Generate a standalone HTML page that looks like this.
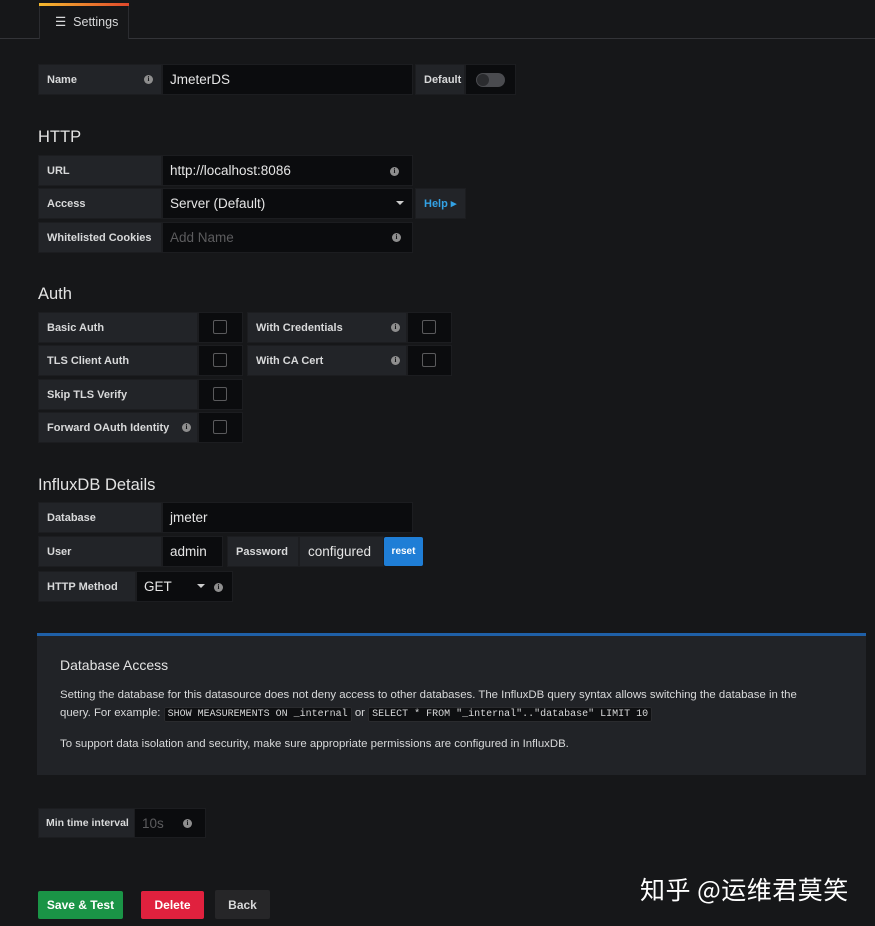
<!DOCTYPE html>
<html><head><meta charset="utf-8"><style>
*{box-sizing:border-box;margin:0;padding:0}
body{width:875px;height:926px;background:#161719;font-family:"Liberation Sans","Noto Sans CJK SC",sans-serif;color:#d8d9da;position:relative;overflow:hidden}
.a{position:absolute}
.lb{position:absolute;background:#222428;color:#d8d9da;font-size:11px;font-weight:bold;padding-left:8px;display:flex;align-items:center;border:1px solid #1c1d20;white-space:nowrap}
.in{position:absolute;background:#0b0c0e;color:#e6e6e6;font-size:13.5px;padding-left:7px;display:flex;align-items:center;border:1px solid #1c1d20}
.ic{position:absolute;width:9px;height:9px;border-radius:50%;background:#8e8e8e;color:#161719;font-size:7px;font-weight:bold;text-align:center;line-height:9px;font-family:"Liberation Serif",serif}
.cb{position:absolute;width:14px;height:14px;border:1px solid #5a5a5c;border-radius:2px}
.box{position:absolute;background:#0b0c0e;border:1px solid #1c1d20}
h3{position:absolute;font-size:16.5px;font-weight:normal;color:#e3e3e3}
code{font-family:"Liberation Mono",monospace;font-size:10px;background:#0e0f11;border:1px solid #2a2b2e;padding:1px 3px;border-radius:2px}
.btn{position:absolute;font-size:12px;font-weight:bold;color:#fff;display:flex;align-items:center;justify-content:center;border-radius:2px}
</style></head><body>
<div class="a" style="left:0;top:38px;width:875px;height:1px;background:#333438"></div>
<div class="a" style="left:39px;top:4px;width:90px;height:35px;background:#161719;border:1px solid #2b2c30;border-bottom:none"></div>
<div class="a" style="left:39px;top:3px;width:90px;height:3px;background:linear-gradient(90deg,#f5b92e,#e0482c)"></div>
<div class="a" style="left:55px;top:14px;font-size:12.5px;color:#d8d9da">☰&nbsp; Settings</div>

<div class="lb" style="left:38px;top:64px;width:124px;height:31px">Name</div><div class="ic" style="left:144px;top:75px">i</div>
<div class="in" style="left:162px;top:64px;width:251px;height:31px">JmeterDS</div>
<div class="lb" style="left:415px;top:64px;width:50px;height:31px">Default</div>
<div class="box" style="left:465px;top:64px;width:51px;height:31px"></div>
<div class="a" style="left:476px;top:73px;width:29px;height:14px;border-radius:7px;background:#4a4b4f"></div>
<div class="a" style="left:477px;top:74px;width:12px;height:12px;border-radius:50%;background:#2a2b2e"></div>

<h3 style="left:38px;top:128px">HTTP</h3>
<div class="lb" style="left:38px;top:155px;width:124px;height:31px">URL</div>
<div class="in" style="left:162px;top:155px;width:251px;height:31px">http://localhost:8086</div><div class="ic" style="left:390px;top:167px">i</div>
<div class="lb" style="left:38px;top:188px;width:124px;height:31px">Access</div>
<div class="in" style="left:162px;top:188px;width:251px;height:31px">Server (Default)</div>
<div class="a" style="left:396px;top:201px;border:4px solid transparent;border-top:4px solid #ccc"></div>
<div class="lb" style="left:415px;top:188px;width:51px;height:31px;color:#33a2e5">Help ▸</div>
<div class="lb" style="left:38px;top:222px;width:124px;height:31px">Whitelisted Cookies</div>
<div class="in" style="left:162px;top:222px;width:251px;height:31px;color:#5c5c5e">Add Name</div><div class="ic" style="left:392px;top:233px">i</div>

<h3 style="left:38px;top:285px">Auth</h3>
<div class="lb" style="left:38px;top:312px;width:160px;height:31px">Basic Auth</div><div class="box" style="left:198px;top:312px;width:45px;height:31px"></div><div class="cb" style="left:213px;top:320px"></div>
<div class="lb" style="left:247px;top:312px;width:160px;height:31px">With Credentials</div><div class="ic" style="left:391px;top:323px">i</div><div class="box" style="left:407px;top:312px;width:45px;height:31px"></div><div class="cb" style="left:422px;top:320px"></div>
<div class="lb" style="left:38px;top:345px;width:160px;height:31px">TLS Client Auth</div><div class="box" style="left:198px;top:345px;width:45px;height:31px"></div><div class="cb" style="left:213px;top:353px"></div>
<div class="lb" style="left:247px;top:345px;width:160px;height:31px">With CA Cert</div><div class="ic" style="left:391px;top:356px">i</div><div class="box" style="left:407px;top:345px;width:45px;height:31px"></div><div class="cb" style="left:422px;top:353px"></div>
<div class="lb" style="left:38px;top:379px;width:160px;height:31px">Skip TLS Verify</div><div class="box" style="left:198px;top:379px;width:45px;height:31px"></div><div class="cb" style="left:213px;top:387px"></div>
<div class="lb" style="left:38px;top:412px;width:160px;height:31px">Forward OAuth Identity</div><div class="ic" style="left:182px;top:423px">i</div><div class="box" style="left:198px;top:412px;width:45px;height:31px"></div><div class="cb" style="left:213px;top:420px"></div>

<h3 style="left:38px;top:476px">InfluxDB Details</h3>
<div class="lb" style="left:38px;top:502px;width:124px;height:31px">Database</div>
<div class="in" style="left:162px;top:502px;width:251px;height:31px">jmeter</div>
<div class="lb" style="left:38px;top:536px;width:124px;height:31px">User</div>
<div class="in" style="left:162px;top:536px;width:61px;height:31px">admin</div>
<div class="lb" style="left:227px;top:536px;width:72px;height:31px">Password</div>
<div class="lb" style="left:299px;top:536px;width:85px;height:31px;font-weight:normal;font-size:13.5px;color:#e6e6e6">configured</div>
<div class="btn" style="left:384px;top:537px;width:39px;height:29px;background:#1f7ed6;font-size:10px">reset</div>
<div class="lb" style="left:38px;top:571px;width:98px;height:31px">HTTP Method</div>
<div class="in" style="left:136px;top:571px;width:97px;height:31px">GET</div>
<div class="a" style="left:197px;top:584px;border:4px solid transparent;border-top:4px solid #ccc"></div>
<div class="ic" style="left:214px;top:583px">i</div>

<div class="a" style="left:37px;top:633px;width:829px;height:142px;background:#212327;border-top:3px solid #1f60a8"></div>
<div class="a" style="left:60px;top:657px;font-size:14px;color:#e3e3e3">Database Access</div>
<div class="a" style="left:60px;top:686px;width:790px;font-size:11.4px;line-height:18px;color:#d8d9da;white-space:nowrap">Setting the database for this datasource does not deny access to other databases. The InfluxDB query syntax allows switching the database in the<br>query. For example: <code>SHOW MEASUREMENTS ON _internal</code> or <code>SELECT * FROM "_internal".."database" LIMIT 10</code></div>
<div class="a" style="left:60px;top:738px;font-size:11.4px;color:#d8d9da">To support data isolation and security, make sure appropriate permissions are configured in InfluxDB.</div>

<div class="lb" style="left:38px;top:808px;width:97px;height:30px;font-size:10.5px;padding-left:7px">Min time interval</div>
<div class="in" style="left:134px;top:808px;width:72px;height:30px;color:#5c5c5e">10s</div><div class="ic" style="left:183px;top:819px">i</div>

<div class="btn" style="left:38px;top:891px;width:85px;height:28px;background:#1a9446">Save &amp; Test</div>
<div class="btn" style="left:141px;top:891px;width:63px;height:28px;background:#e0213e">Delete</div>
<div class="btn" style="left:215px;top:890px;width:55px;height:29px;background:#262628;color:#d8d9da">Back</div>
<div class="a" style="left:640px;top:871px;font-size:25px;color:#fff;font-family:'Noto Sans CJK SC',sans-serif;letter-spacing:0.5px;white-space:nowrap">知乎 @运维君莫笑</div>
</body></html>
